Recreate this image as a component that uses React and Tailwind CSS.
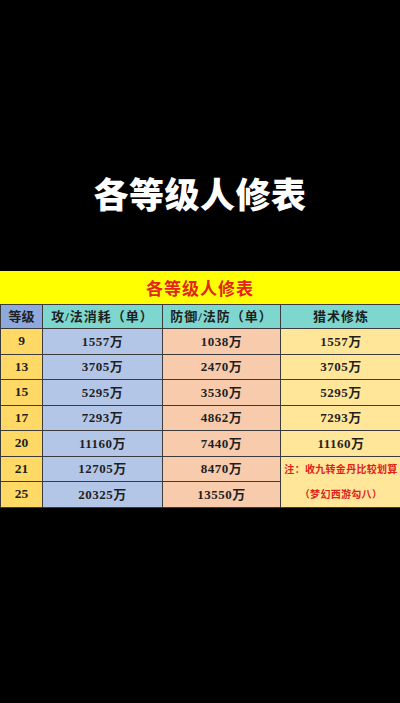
const rows = [
  ["9", "1557万", "1038万", "1557万"],
  ["13", "3705万", "2470万", "3705万"],
  ["15", "5295万", "3530万", "5295万"],
  ["17", "7293万", "4862万", "7293万"],
  ["20", "11160万", "7440万", "11160万"],
  ["21", "12705万", "8470万", null],
  ["25", "20325万", "13550万", null],
];

const serif = { fontFamily: '"Liberation Serif", "Noto Sans CJK SC", serif' };

export default function App() {
  return (
    <div className="w-[400px] h-[703px] bg-black flex flex-col" style={{ fontFamily: '"Noto Sans CJK SC", sans-serif' }}>
      {/* Big title */}
      <div className="pt-[174px] h-[271px]">
        <h1 className="text-center text-white text-[35px] leading-[38px] font-black tracking-[0.5px]">各等级人修表</h1>
      </div>

      {/* Table */}
      <div className="bg-[#3b3b3b] flex flex-col gap-px pb-px" style={serif}>
        <div className="h-[33px] bg-[#ffff00] flex items-center justify-center">
          <span className="text-[#e3241b] text-[17px] font-bold tracking-[1px]" style={{ fontFamily: '"Noto Sans CJK SC", sans-serif' }}>各等级人修表</span>
        </div>
        <div className="grid grid-cols-[41px_119px_117px_120px] grid-rows-[23px_repeat(7,24.5px)] gap-px pl-px">
          <div className="bg-[#8ea9db] flex items-center justify-center text-[13px] font-bold text-[#1f1f1f]">等级</div>
          <div className="bg-[#7dd7cf] flex items-center justify-center text-[13px] font-bold text-[#1f1f1f] tracking-[1px]">攻/法消耗（单）</div>
          <div className="bg-[#7dd7cf] flex items-center justify-center text-[13px] font-bold text-[#1f1f1f] tracking-[1px]">防御/法防（单）</div>
          <div className="bg-[#7dd7cf] flex items-center justify-center text-[13px] font-bold text-[#1f1f1f] tracking-[1px]">猎术修炼</div>

          {rows.map((r, i) => (
            <div key={r[0]} className="contents">
              <div className="bg-[#ffd966] flex items-center justify-center text-[13.5px] font-bold text-[#1f1f1f]">{r[0]}</div>
              <div className="bg-[#b4c6e7] flex items-center justify-center text-[13px] font-bold text-[#1f1f1f] tracking-[0.5px]">{r[1]}</div>
              <div className="bg-[#f8cbad] flex items-center justify-center text-[13px] font-bold text-[#1f1f1f] tracking-[0.5px]">{r[2]}</div>
              {r[3] !== null && (
                <div className="bg-[#ffe699] flex items-center justify-center text-[13px] font-bold text-[#1f1f1f] tracking-[0.5px]">{r[3]}</div>
              )}
              {i === 5 && (
                <div className="row-span-2 bg-[#ffe699] flex flex-col justify-around items-center text-[10px] tracking-[0.3px] font-bold text-[#e0221a] whitespace-nowrap">
                  <span>注：收九转金丹比较划算</span>
                  <span>（梦幻西游勾八）</span>
                </div>
              )}
            </div>
          ))}
        </div>
      </div>
    </div>
  );
}
